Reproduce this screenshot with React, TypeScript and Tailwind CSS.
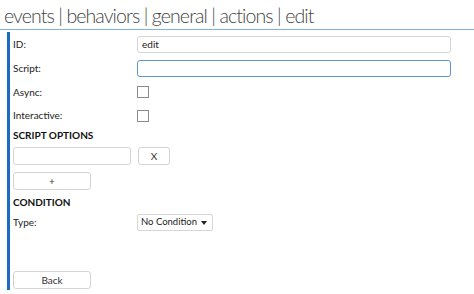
import React from "react";

const font = { fontFamily: 'Lato, "Open Sans", sans-serif' };

const Row: React.FC<{ label: string; children: React.ReactNode; className?: string }> = ({ label, children, className }) => (
  <div className={`flex items-center ${className ?? ""}`}>
    <span className="w-[124px] shrink-0 text-[10px] text-[#222]">{label}</span>
    {children}
  </div>
);

const Checkbox: React.FC = () => (
  <span className="block w-[12px] h-[12px] border border-[#8a8a8a] bg-white" />
);

const Button: React.FC<{ label: string; className?: string }> = ({ label, className }) => (
  <button className={`h-[18px] border border-[#d4d4d4] rounded-[3px] bg-white text-[10px] text-[#333] flex items-center justify-center ${className ?? ""}`}>
    {label}
  </button>
);

export default function App() {
  return (
    <div className="w-[474px] h-[294px] bg-white flex flex-col overflow-hidden" style={font}>
      <div className="h-[30px] border-b border-[#7fb2de] pl-[4px] pt-[6px]">
        <h1 className="text-[19.5px] font-light text-[#444] leading-[19px] tracking-[-0.9px] whitespace-nowrap">
          events | behaviors | general | actions | edit
        </h1>
      </div>
      <div className="ml-[7px] mt-[2px] h-[258px] border-l-[3px] border-[#1a6cc2] pl-[3px] pr-[23px] flex flex-col">
        <Row label="ID:" className="h-[24px]">
          <div className="flex-1 h-[17px] border border-[#d6d6d6] rounded-[3px] px-[4px] flex items-center text-[10px] text-[#222]">
            edit
          </div>
        </Row>
        <Row label="Script:" className="h-[24px]">
          <div className="flex-1 h-[17px] border border-[#5b97cf] rounded-[3px]" />
        </Row>
        <Row label="Async:" className="h-[24px]">
          <Checkbox />
        </Row>
        <Row label="Interactive:" className="h-[23px]">
          <Checkbox />
        </Row>
        <div className="h-[16px] flex items-center text-[10px] font-bold text-[#111]">SCRIPT OPTIONS</div>
        <div className="mt-[4px] flex items-center gap-[7px]">
          <div className="w-[118px] h-[18px] border border-[#d6d6d6] rounded-[3px]" />
          <Button label="X" className="w-[32px]" />
        </div>
        <Button label="+" className="mt-[7px] w-[78px] h-[17px]" />
        <div className="mt-[4px] h-[16px] flex items-center text-[10px] font-bold text-[#111]">CONDITION</div>
        <Row label="Type:" className="mt-[4px] h-[17px]">
          <div className="w-[76px] h-[17px] border border-[#d6d6d6] rounded-[2px] pl-[3px] pr-[5px] flex items-center justify-between text-[9.5px] text-[#222] whitespace-nowrap">
            <span>No Condition</span>
            <svg width="6" height="4" viewBox="0 0 6 4"><path d="M0 0h6L3 4z" fill="#222" /></svg>
          </div>
        </Row>
        <Button label="Back" className="mt-auto mb-[1px] w-[78px] h-[17px]" />
      </div>
    </div>
  );
}
